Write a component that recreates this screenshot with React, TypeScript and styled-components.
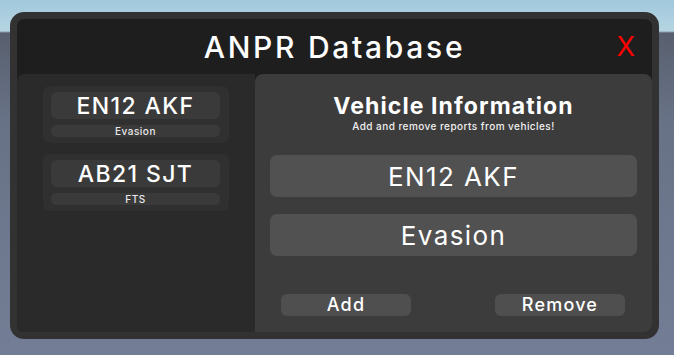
import React from 'react';
import styled, { createGlobalStyle } from 'styled-components';

const GlobalStyle = createGlobalStyle`
	html, body {
		margin: 0;
		padding: 0;
	}
	body {
		width: 674px;
		height: 355px;
		overflow: hidden;
		font-family: 'Inter', 'Liberation Sans', sans-serif;
		background: linear-gradient(
			to bottom,
			#a1c8dc 0px,
			#b6d5e2 31px,
			#58606f 33px,
			#687286 120px,
			#737e96 355px
		);
	}
`;

const Stage = styled.div`
	width: 674px;
	height: 355px;
	box-sizing: border-box;
	padding: 12px 0 0 10px;
`;

const Window = styled.div`
	width: 649px;
	height: 327px;
	box-sizing: border-box;
	border: 7px solid #323232;
	border-radius: 14px;
	background-color: #1e1e1e;
	display: flex;
	flex-direction: column;
	overflow: hidden;
	color: #ffffff;
`;

const Header = styled.div`
	height: 55px;
	flex: none;
	display: grid;
	grid-template-columns: 1fr auto 1fr;
	align-items: center;
`;

const Title = styled.div`
	grid-column: 2;
	font-size: 30px;
	font-weight: 500;
	letter-spacing: 2.7px;
	line-height: 1;
`;

const CloseButton = styled.button`
	grid-column: 3;
	justify-self: end;
	margin-right: 17px;
	padding: 0;
	border: none;
	background: none;
	color: #ff0000;
	font-family: 'Inter', 'Liberation Sans', sans-serif;
	font-size: 27px;
	font-weight: 400;
	line-height: 1;
	cursor: pointer;
`;

const Body = styled.div`
	flex: 1;
	display: flex;
	min-height: 0;
`;

const PlateList = styled.div`
	width: 238px;
	flex: none;
	box-sizing: border-box;
	padding: 12px 26px 0;
	background-color: #2a2a2a;
	border-radius: 8px 0 0 0;
	display: flex;
	flex-direction: column;
	gap: 11px;
`;

const PlateCard = styled.div`
	background-color: #303030;
	border-radius: 7px;
	padding: 6px 9px 6px 8px;
	display: flex;
	flex-direction: column;
	gap: 6px;
	cursor: pointer;
`;

const PlateNumber = styled.div`
	height: 27px;
	border-radius: 6px;
	background-color: #3a3a3a;
	display: flex;
	align-items: center;
	justify-content: center;
	font-size: 23px;
	font-weight: 500;
	letter-spacing: 1.4px;
`;

const PlateReport = styled.div`
	height: 12px;
	border-radius: 5px;
	background-color: #3a3a3a;
	display: flex;
	align-items: center;
	justify-content: center;
	font-size: 10px;
	font-weight: 500;
	letter-spacing: 0.5px;
	color: #e8e8e8;
`;

const InfoPanel = styled.div`
	flex: 1;
	background-color: #3c3c3c;
	border-radius: 8px 8px 0 0;
	display: flex;
	flex-direction: column;
	align-items: stretch;
	padding: 18px 15px 0;
`;

const InfoTitle = styled.div`
	text-align: center;
	font-size: 23px;
	font-weight: 700;
	letter-spacing: 1.1px;
	line-height: 28px;
`;

const InfoSubtitle = styled.div`
	text-align: center;
	font-size: 10px;
	font-weight: 500;
	letter-spacing: 0.45px;
	line-height: 12px;
	color: #f0f0f0;
`;

const Fields = styled.div`
	margin-top: 23px;
	display: flex;
	flex-direction: column;
	gap: 17px;
`;

const Field = styled.div`
	height: 42px;
	border-radius: 7px;
	background-color: #515151;
	display: flex;
	align-items: center;
	justify-content: center;
	font-size: 26px;
	font-weight: 400;
	letter-spacing: 1.4px;
`;

const Actions = styled.div`
	margin-top: 38px;
	padding: 0 12px 0 11px;
	display: flex;
	justify-content: space-between;
`;

const ActionButton = styled.button`
	width: 130px;
	height: 22px;
	padding: 0;
	border: none;
	border-radius: 6px;
	background-color: #4f4f4f;
	color: #ffffff;
	font-family: 'Inter', 'Liberation Sans', sans-serif;
	font-size: 18px;
	font-weight: 500;
	letter-spacing: 1.2px;
	line-height: 1;
	cursor: pointer;
`;

interface Plate {
	number: string;
	report: string;
}

const plates: Plate[] = [
	{ number: 'EN12 AKF', report: 'Evasion' },
	{ number: 'AB21 SJT', report: 'FTS' },
];

export default function App() {
	const selected = plates[0];

	return (
		<>
			<GlobalStyle />
			<Stage>
				<Window>
					<Header>
						<Title>ANPR Database</Title>
						<CloseButton>X</CloseButton>
					</Header>
					<Body>
						<PlateList>
							{plates.map((plate) => (
								<PlateCard key={plate.number}>
									<PlateNumber>{plate.number}</PlateNumber>
									<PlateReport>{plate.report}</PlateReport>
								</PlateCard>
							))}
						</PlateList>
						<InfoPanel>
							<InfoTitle>Vehicle Information</InfoTitle>
							<InfoSubtitle>Add and remove reports from vehicles!</InfoSubtitle>
							<Fields>
								<Field>{selected.number}</Field>
								<Field>{selected.report}</Field>
							</Fields>
							<Actions>
								<ActionButton>Add</ActionButton>
								<ActionButton>Remove</ActionButton>
							</Actions>
						</InfoPanel>
					</Body>
				</Window>
			</Stage>
		</>
	);
}
